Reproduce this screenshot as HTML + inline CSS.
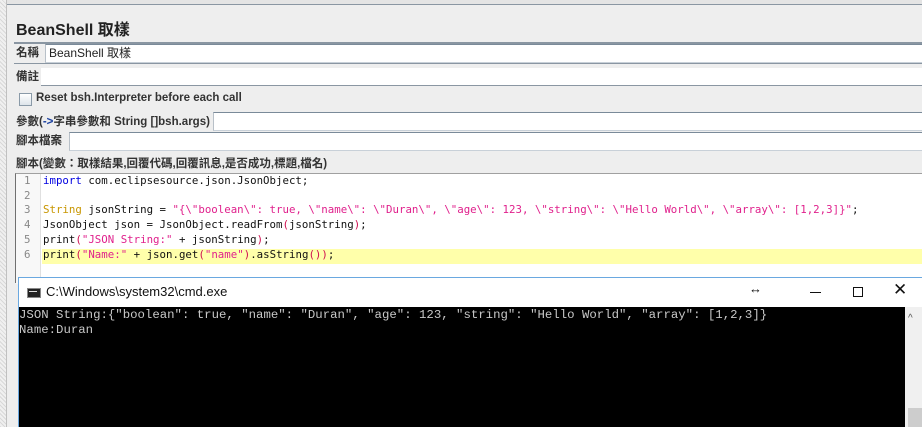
<!DOCTYPE html><html><head><meta charset="utf-8"><style>
*{margin:0;padding:0;box-sizing:border-box}
body{width:922px;height:427px;overflow:hidden;background:#eeeeee;position:relative;font-family:"Liberation Sans","Noto Sans CJK TC",sans-serif;font-size:12px;color:#222}
.a{position:absolute}
.inp{position:absolute;background:#fff;border-top:1px solid #7a8a99;border-left:1px solid #b8c0c8;border-bottom:1px solid #c8d0d8;height:19px}
.lbl{position:absolute;font-weight:bold;font-size:11.5px;line-height:16px;color:#333}
.code{position:absolute;font-family:"DejaVu Sans Mono",monospace;font-size:10.75px;white-space:pre;line-height:14.7px}
.k{color:#0000e0}.t{color:#c89600}.s{color:#e0208c}.p{color:#d01050}
</style></head><body>
<div class="a" style="left:0;top:0;width:7px;height:427px;background:repeating-linear-gradient(45deg,#d8d8d8 0 1px,#f0f0f0 1px 3px);border-right:1px solid #c0c0c0"></div>
<div class="a" style="left:7px;top:0;width:915px;height:5px;background:#e4e4e4;border-bottom:1px solid #8a96a2"></div>
<div class="a" style="left:16px;top:16px;font-size:16px;font-weight:bold;color:#222">BeanShell 取樣</div>
<div class="a" style="left:14px;top:42px;width:908px;height:2px;background:#8a96a2"></div>
<div class="lbl" style="left:16px;top:45px">名稱</div>
<div class="inp" style="left:45px;top:44px;width:877px;height:19px;padding-left:3px;font-size:12px;line-height:17px">BeanShell 取樣</div>
<div class="a" style="left:41px;top:68px;width:881px;height:18px;background:#fff;border-bottom:1px solid #8a96a2"></div>
<div class="a" style="left:14px;top:63px;width:908px;height:1px;background:#8a96a2"></div>
<div class="lbl" style="left:16px;top:69px">備註</div>
<div class="a" style="left:19px;top:93px;width:13px;height:13px;border:1px solid #8a9aa8;background:linear-gradient(#fff,#dde4ea)"></div>
<div class="a" style="left:36px;top:92px;font-size:11.5px;font-weight:bold;color:#333">Reset bsh.Interpreter before each call</div>
<div class="lbl" style="left:16px;top:114px">參數(<span style="color:#1a40a0">-&gt;</span>字串參數和 String []bsh.args)</div>
<div class="inp" style="left:213px;top:112px;width:709px"></div>
<div class="lbl" style="left:16px;top:133px">腳本檔案</div>
<div class="inp" style="left:69px;top:132px;width:853px"></div>
<div class="lbl" style="left:16px;top:156px">腳本(變數：取樣結果,回覆代碼,回覆訊息,是否成功,標題,檔名)</div>
<div class="a" style="left:15px;top:173px;width:907px;height:110px;background:#fff;border-left:1px solid #707070;border-top:1px solid #a0a0a0"></div>
<div class="a" style="left:16px;top:174px;width:25px;height:110px;background:#f8f8f8;border-right:1px solid #e0e0e0"></div>
<div class="a" style="left:42px;top:249px;width:880px;height:15px;background:#ffffaa"></div>
<div class="code" style="left:24px;top:174px;color:#888;text-align:right">1
2
3
4
5
6</div>
<div class="code" style="left:43px;top:174px;color:#111"><span class="k">import</span> com.eclipsesource.json.JsonObject;

<span class="t">String</span> jsonString = <span class="s">"{\"boolean\": true, \"name\": \"Duran\", \"age\": 123, \"string\": \"Hello World\", \"array\": [1,2,3]}"</span>;
JsonObject json = JsonObject.readFrom<span class="p">(</span>jsonString<span class="p">)</span>;
print<span class="p">(</span><span class="s">"JSON String:"</span> + jsonString<span class="p">)</span>;
print<span class="p">(</span><span class="s">"Name:"</span> + json.get<span class="p">(</span><span class="s">"name"</span><span class="p">)</span>.asString<span class="p">())</span>;</div>
<div class="a" style="left:18px;top:277px;width:904px;height:150px;background:#fff;border-top:1px solid #6aa8e0;border-left:1px solid #6aa8e0"></div>
<div class="a" style="left:27px;top:288px;width:14px;height:10px;background:#222;border:1px solid #888"></div>
<div class="a" style="left:29px;top:291px;width:8px;height:3px;border-top:1px solid #ddd"></div>
<div class="a" style="left:46px;top:284px;font-size:13px;color:#111">C:\Windows\system32\cmd.exe</div>
<div class="a" style="left:749px;top:281px;font-size:13px;color:#111">↔</div>
<div class="a" style="left:810px;top:292px;width:11px;height:1px;background:#111"></div>
<div class="a" style="left:853px;top:287px;width:10px;height:10px;border:1px solid #111"></div>
<div class="a" style="left:893px;top:280px;font-size:17px;color:#111;font-weight:300">✕</div>
<div class="a" style="left:19px;top:307px;width:886px;height:120px;background:#000"></div>
<div class="a" style="left:905px;top:307px;width:17px;height:120px;background:#f0f0f0"></div>
<div class="a" style="left:908px;top:313px;font-size:10px;color:#555">^</div>
<div class="a" style="left:908px;top:408px;width:14px;height:19px;background:#cdcdcd"></div>
<div class="a" style="left:19px;top:308px;font-family:'Liberation Mono',monospace;font-size:12.35px;line-height:15px;color:#c8c8c8;white-space:pre">JSON String:{"boolean": true, "name": "Duran", "age": 123, "string": "Hello World", "array": [1,2,3]}
Name:Duran</div>
</body></html>
